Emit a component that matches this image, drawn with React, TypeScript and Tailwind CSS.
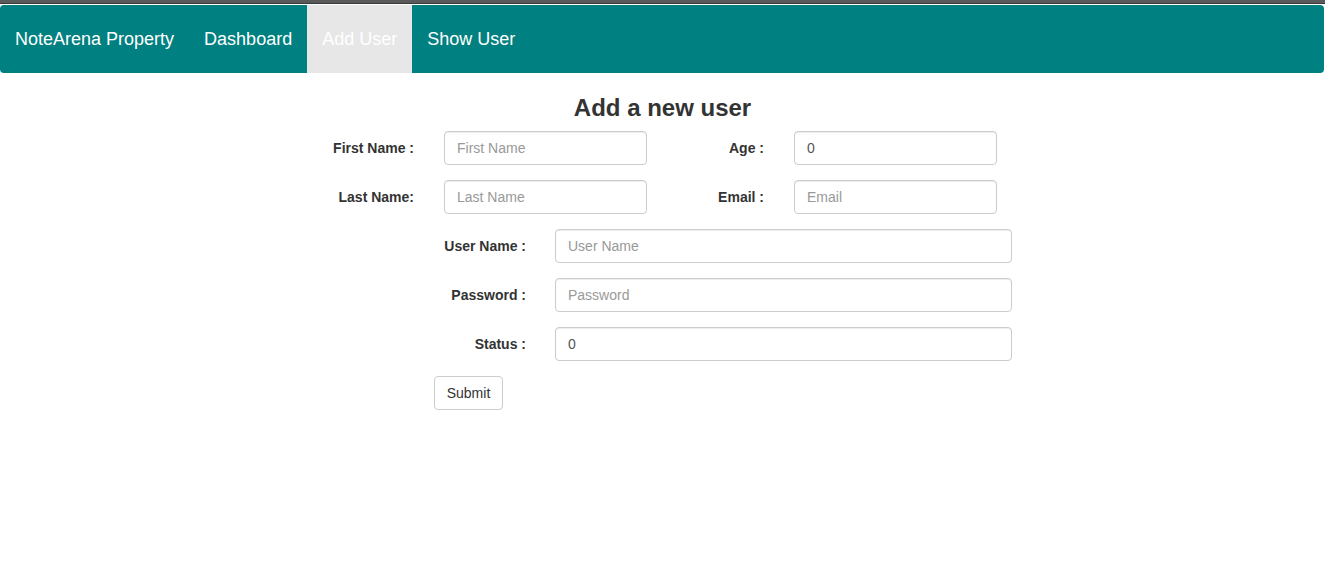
import React from "react";

const font = { fontFamily: '"Liberation Sans", Arial, sans-serif' };

function Field({ placeholder, value, w }: { placeholder?: string; value?: string; w: string }) {
  return (
    <input
      readOnly
      placeholder={placeholder}
      defaultValue={value}
      className={`${w} h-[34px] rounded-[4px] border border-[#cccccc] bg-white px-[12px] text-[14px] text-[#555555] placeholder:text-[#999999] shadow-[inset_0_1px_1px_rgba(0,0,0,0.075)] outline-none`}
      style={font}
    />
  );
}

export default function App() {
  return (
    <div className="min-h-[571px] w-full bg-white text-[#333333]" style={font}>
      <div className="h-[3px] bg-[#5a5a5a]" />
      <div className="h-[1px] bg-[#3a3a3a]" />
      <div className="h-[1px] bg-white" />
      <nav className="mr-[1px] flex h-[68px] items-stretch rounded-[4px] bg-[#008080] text-[18px] leading-[20px] text-white">
        <div className="flex items-center px-[15px]">NoteArena Property</div>
        <div className="flex items-center px-[15px]">Dashboard</div>
        <div className="flex items-center bg-[#e7e7e7] px-[15px]">Add User</div>
        <div className="flex items-center px-[15px]">Show User</div>
      </nav>

      <h3 className="mt-[22px] text-center text-[24px] font-bold leading-[26px] text-[#333333]">Add a new user</h3>

      <div className="mt-[10px] flex flex-col gap-[15px] text-[14px]">
        <div className="ml-[320px] flex items-center">
          <label className="w-[94px] text-right font-bold">First Name :</label>
          <div className="ml-[30px]">
            <Field w="w-[203px]" placeholder="First Name" />
          </div>
          <label className="w-[117px] text-right font-bold">Age :</label>
          <div className="ml-[30px]">
            <Field w="w-[203px]" value="0" />
          </div>
        </div>
        <div className="ml-[320px] flex items-center">
          <label className="w-[94px] text-right font-bold">Last Name:</label>
          <div className="ml-[30px]">
            <Field w="w-[203px]" placeholder="Last Name" />
          </div>
          <label className="w-[117px] text-right font-bold">Email :</label>
          <div className="ml-[30px]">
            <Field w="w-[203px]" placeholder="Email" />
          </div>
        </div>
        <div className="ml-[425px] flex items-center">
          <label className="w-[101px] text-right font-bold">User Name :</label>
          <div className="ml-[29px]">
            <Field w="w-[457px]" placeholder="User Name" />
          </div>
        </div>
        <div className="ml-[425px] flex items-center">
          <label className="w-[101px] text-right font-bold">Password :</label>
          <div className="ml-[29px]">
            <Field w="w-[457px]" placeholder="Password" />
          </div>
        </div>
        <div className="ml-[425px] flex items-center">
          <label className="w-[101px] text-right font-bold">Status :</label>
          <div className="ml-[29px]">
            <Field w="w-[457px]" value="0" />
          </div>
        </div>
        <div className="ml-[434px]">
          <button className="h-[34px] w-[69px] rounded-[4px] border border-[#cccccc] bg-white text-[14px] text-[#333333]" style={font}>
            Submit
          </button>
        </div>
      </div>
    </div>
  );
}
